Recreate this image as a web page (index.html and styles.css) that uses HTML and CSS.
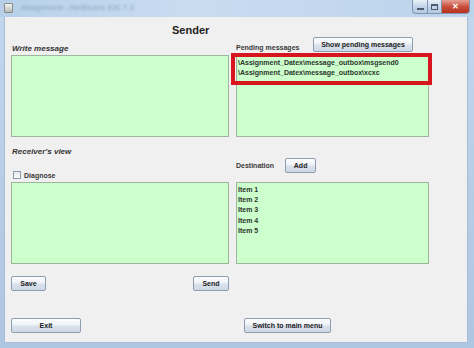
FILE: index.html
```html
<!DOCTYPE html>
<html lang="en">
<head>
    <meta charset="UTF-8">
    <title>Sender</title>
    <link rel="stylesheet" href="styles.css">
</head>
<body>
    <div class="window">
        <!-- Title Bar -->
        <div class="titlebar">
            <span class="app-icon"></span>
            <span class="title-text">Assignment - NetBeans IDE 7.3</span>
            <div class="controls">
                <span class="ctl min"><span class="min-bar"></span></span>
                <span class="ctl max"><span class="max-box"></span></span>
                <span class="ctl close">&#x2715;</span>
            </div>
        </div>

        <!-- Main Panel -->
        <div class="panel">
            <h1 class="heading">Sender</h1>

            <div class="section-label top-label">Write message</div>
            <div class="pending-head">
                <span class="label">Pending messages</span>
                <button class="btn show-btn">Show pending messages</button>
            </div>

            <div class="box"></div>
            <div class="box list pending">
                <div class="highlight"></div>
                <div>\Assignment_Datex\message_outbox\msgsend0</div>
                <div>\Assignment_Datex\message_outbox\xcxc</div>
            </div>

            <div class="section-label receiver-label">Receiver's view</div>
            <div class="spacer"></div>

            <div class="check-row">
                <span class="checkbox"></span>
                <span class="label">Diagnose</span>
            </div>
            <div class="dest-row">
                <span class="label">Destination</span>
                <button class="btn add-btn">Add</button>
            </div>

            <div class="box"></div>
            <div class="box list items">
                <div>Item 1</div>
                <div>Item 2</div>
                <div>Item 3</div>
                <div>Item 4</div>
                <div>Item 5</div>
            </div>

            <div class="btn-row">
                <button class="btn save-btn">Save</button>
                <button class="btn send-btn">Send</button>
            </div>
            <div class="spacer"></div>

            <div class="btn-row">
                <button class="btn exit-btn">Exit</button>
            </div>
            <div class="btn-row">
                <button class="btn switch-btn">Switch to main menu</button>
            </div>
        </div>
    </div>
</body>
</html>
```

FILE: styles.css
```css
* {
    margin: 0;
    padding: 0;
    box-sizing: border-box;
}

body {
    width: 474px;
    height: 348px;
    overflow: hidden;
    font-family: "Liberation Sans", Arial, sans-serif;
}

/* Window frame */
.window {
    width: 474px;
    height: 348px;
    display: flex;
    flex-direction: column;
    background: linear-gradient(to bottom, #c3d8ee, #b4cce6 60%, #aec6e2);
}

.titlebar {
    height: 17px;
    display: flex;
    align-items: flex-start;
    background: linear-gradient(to right, #b7d0ea, #c9dcf0 40%, #bcd3ec);
}

.app-icon {
    width: 9px;
    height: 10px;
    margin: 3px 0 0 4px;
    background: linear-gradient(to bottom, #f4f4f4, #b9b9b9);
    border: 1px solid #8a8a8a;
    border-radius: 1px;
}

.title-text {
    margin: 3px 0 0 8px;
    font-size: 8px;
    color: #8fa6c2;
    filter: blur(1px);
}

.controls {
    margin-left: auto;
    margin-right: 4px;
    display: flex;
}

.ctl {
    height: 14px;
    display: flex;
    align-items: center;
    justify-content: center;
    border: 1px solid #7f95b0;
    border-top: none;
}

.min,
.max {
    width: 15px;
    background: linear-gradient(to bottom, #e9f0f8, #c4d5e9 50%, #b3c8e2);
}

.min {
    border-radius: 0 0 0 4px;
    border-right: none;
}

.min-bar {
    width: 7px;
    height: 2px;
    margin-top: 4px;
    background: #4f5d70;
}

.max-box {
    width: 7px;
    height: 6px;
    border: 1px solid #4f5d70;
    border-top-width: 2px;
}

.close {
    width: 28px;
    border-left: none;
    border-radius: 0 0 4px 0;
    background: linear-gradient(to bottom, #e6a195, #c9503e 50%, #b8301c);
    color: #fff;
    font-size: 8px;
    font-weight: bold;
}

/* Content panel */
.panel {
    flex: 1;
    margin: 0 6px 5px 4px;
    padding-left: 6px;
    background-color: #f0f0f0;
    border: 1px solid #a9bdd4;
    border-top: none;
    display: grid;
    grid-template-columns: 218px 193px;
    grid-template-rows: 20px 18px 82px 21px 24px 82px 27px 43px;
    column-gap: 7px;
    color: #333;
}

.heading {
    grid-column: 1 / -1;
    align-self: end;
    padding-left: 161px;
    font-size: 11px;
    font-weight: bold;
    color: #222;
    line-height: 13px;
}

.label {
    font-size: 7px;
    font-weight: bold;
    color: #3a3a3a;
}

.section-label {
    font-size: 8px;
    font-weight: bold;
    font-style: italic;
    color: #333;
    padding-left: 1px;
}

.top-label {
    align-self: end;
    padding-bottom: 2px;
}

.receiver-label {
    align-self: end;
    padding-bottom: 2px;
}

.pending-head {
    display: flex;
    align-items: flex-end;
    justify-content: space-between;
    padding-right: 16px;
    padding-bottom: 3px;
}

.pending-head .label {
    margin-bottom: 1px;
}

/* Green text areas */
.box {
    background-color: #ccffcc;
    border: 1px solid #9eb59e;
}

.list {
    padding: 2px 1px;
    font-size: 7px;
    font-weight: bold;
    line-height: 10px;
    color: #2c342c;
}

.items {
    line-height: 10.2px;
}

.pending {
    position: relative;
}

.highlight {
    position: absolute;
    top: -3px;
    left: -6px;
    width: 201px;
    height: 32px;
    border: 4px solid #d8151f;
}

/* Checkbox & destination */
.check-row {
    display: flex;
    align-items: center;
    gap: 3px;
    align-self: end;
    padding-left: 2px;
    padding-bottom: 3px;
}

.checkbox {
    width: 8px;
    height: 8px;
    border: 1px solid #8d9aa8;
    background: linear-gradient(to bottom, #e4e8ee, #fdfdfd);
}

.dest-row {
    display: flex;
    align-items: center;
    gap: 11px;
    align-self: start;
}

/* Buttons */
.btn {
    height: 15px;
    font-family: "Liberation Sans", Arial, sans-serif;
    font-size: 7px;
    font-weight: bold;
    color: #222;
    border: 1px solid #8e9db1;
    border-radius: 2px;
    background: linear-gradient(to bottom, #fdfdfe, #eef2f7 45%, #d9e1ec 55%, #cfd9e6);
}

.show-btn {
    width: 100px;
}

.add-btn {
    width: 31px;
}

.btn-row {
    display: flex;
    justify-content: space-between;
    align-items: flex-end;
}

.save-btn {
    width: 35px;
}

.send-btn {
    width: 36px;
}

.exit-btn {
    width: 70px;
    margin-bottom: 1px;
}

.switch-btn {
    width: 87px;
    margin-left: 8px;
    margin-bottom: 1px;
}
```
